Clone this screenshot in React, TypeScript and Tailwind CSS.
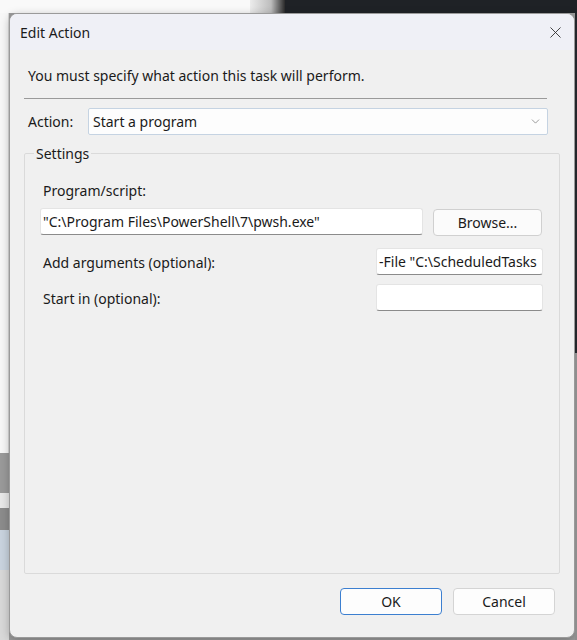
import { X, ChevronDown } from "lucide-react";

const FONT = "font-['Noto_Sans','Liberation_Sans',sans-serif]";

function TextBox({ value, className }: { value?: string; className: string }) {
  return (
    <div
      className={`h-[27px] bg-white border border-[#e4e4e4] border-b-[#8b8b8b] rounded-[3px] pl-[2px] flex items-center overflow-hidden whitespace-nowrap text-[#1a1a1a] ${className}`}
    >
      {value}
    </div>
  );
}

function Button({ label, primary }: { label: string; primary?: boolean }) {
  return (
    <div
      className={`h-[27px] w-[102px] rounded-[4px] bg-[#fdfdfd] flex items-center justify-center text-[#1a1a1a] ${
        primary ? "border-[1.5px] border-[#3c7fd0]" : "border border-[#d4d4d4]"
      }`}
    >
      {label}
    </div>
  );
}

export default function App() {
  return (
    <div className={`w-[577px] h-[640px] flex flex-col overflow-hidden bg-[#9c9c9c] text-[14px] ${FONT}`}>
      {/* window behind */}
      <div className="h-[13px] flex shrink-0">
        <div className="w-[250px] bg-[#f9f9f9]" />
        <div className="w-[35px] bg-[linear-gradient(90deg,#ececec,#bdbdbd_60%,#2a2a2a)]" />
        <div className="flex-1 bg-[#1f2226]" />
      </div>

      <div className="flex flex-1">
        <div className="w-[9px] flex flex-col shrink-0 bg-[#f7f7f7]">
          <div className="h-[440px] border-r border-[#d8d8d8]" />
          <div className="h-[40px] bg-[#9a9a9a]" />
          <div className="h-[15px] bg-[#e8e8e8]" />
          <div className="h-[22px] bg-[#8c8c8c]" />
          <div className="h-[40px] bg-[#c9d3de]" />
          <div className="flex-1 bg-[#d8d8d8]" />
        </div>

        {/* dialog */}
        <div className="w-[566px] h-[625px] flex flex-col rounded-[8px] border border-[#9a9a9a] bg-[#f0f0f0] overflow-hidden shadow-[0_2px_8px_rgba(0,0,0,0.25)]">
          <div className="h-[36px] bg-[#eff0f6] flex items-center justify-between pl-[10px] pr-[9px] text-[#1b1b1b]">
            <span>Edit Action</span>
            <X className="w-[19px] h-[19px] text-[#2a2a2a]" strokeWidth={1.1} />
          </div>

          <div className="flex flex-col px-[14px] text-[#1a1a1a]">
            <div className="mt-[15px] h-[20px] pl-[4px] flex items-center">
              You must specify what action this task will perform.
            </div>
            <div className="mt-[13px] mr-[13px] h-px bg-[#9a9a9a]" />

            <div className="mt-[9px] h-[27px] flex items-center mr-[12px]">
              <span className="w-[64px] pl-[4px]">Action:</span>
              <div className="flex-1 h-[27px] bg-[#fdfdfd] border border-[#c5d3e2] rounded-[2px] pl-[4px] pr-[5px] flex items-center justify-between">
                <span>Start a program</span>
                <ChevronDown className="w-[13px] h-[13px] text-[#666]" strokeWidth={1.2} />
              </div>
            </div>

            <div className="mt-[18px] h-[421px] border border-[#dadada] rounded-[2px] flex flex-col pl-[15px] pr-[17px]">
              <div className="-mt-[10px] ml-[-6px] self-start bg-[#f0f0f0] px-[2px] h-[18px] flex items-center">
                Settings
              </div>

              <div className="mt-[18px] h-[20px] pl-[3px] flex items-center">Program/script:</div>
              <div className="mt-[8px] flex items-start gap-[10px]">
                <TextBox value={'"C:\\Program Files\\PowerShell\\7\\pwsh.exe"'} className="w-[383px]" />
                <div className="mt-[1px] h-[27px] w-[109px] rounded-[4px] border border-[#d0d0d0] bg-[#fbfbfb] flex items-center justify-center">
                  Browse...
                </div>
              </div>

              <div className="mt-[12px] flex items-center justify-between">
                <span className="pl-[3px] pt-[2px]">Add arguments (optional):</span>
                <TextBox value={'-File "C:\\ScheduledTasks'} className="w-[167px] mr-[-1px]" />
              </div>

              <div className="mt-[9px] flex items-center justify-between">
                <span className="pl-[3px] pt-[2px]">Start in (optional):</span>
                <TextBox className="w-[167px] mr-[-1px]" />
              </div>
            </div>

            <div className="mt-[14px] flex justify-end gap-[11px] pr-[5px]">
              <Button label="OK" primary />
              <Button label="Cancel" />
            </div>
          </div>
        </div>

        <div className="flex-1 flex flex-col">
          <div className="h-[340px] bg-[#23262b]" />
          <div className="flex-1 bg-[#8e8e8e]" />
        </div>
      </div>
    </div>
  );
}
